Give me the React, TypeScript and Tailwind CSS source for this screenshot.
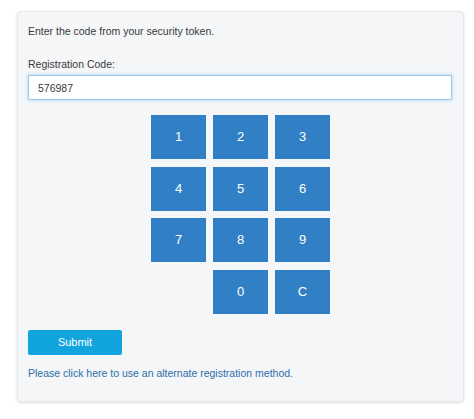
import { useState } from "react";

const keys = ["1", "2", "3", "4", "5", "6", "7", "8", "9", "", "0", "C"];

export default function App() {
  const [code, setCode] = useState("576987");

  const press = (k: string) => {
    if (k === "C") setCode("");
    else setCode((c) => c + k);
  };

  return (
    <div className="w-[474px] h-[419px] bg-white pt-[11px] pl-[17px] font-['Liberation_Sans',Arial,sans-serif]">
      <div className="w-[447px] h-[391px] bg-[#f4f6f8] border border-[#e6e9ec] rounded-[4px] shadow-[0_1px_3px_rgba(0,0,0,0.12)] pt-[12px] px-[10px]">
        <p className="text-[10.5px] leading-[14px] text-[#3a3a3a]">Enter the code from your security token.</p>
        <label className="block mt-[19px] text-[10.5px] leading-[14px] text-[#3a3a3a]">Registration Code:</label>
        <input
          autoFocus
          value={code}
          onChange={(e) => setCode(e.target.value)}
          className="mt-[4px] w-[424px] h-[25px] bg-white border border-[#9ecbf0] shadow-[0_0_3px_rgba(102,175,233,0.6)] px-[9px] text-[10.5px] text-[#3a3a3a] caret-[#333] outline-none"
        />
        <div className="mt-[15px] mx-auto w-[179px] grid grid-cols-[55px_55px_55px] gap-x-[7px] gap-y-[7.5px]">
          {keys.map((k, i) =>
            k === "" ? (
              <div key={i} />
            ) : (
              <button
                key={i}
                onClick={() => press(k)}
                className="h-[44px] bg-[#3180c5] text-white text-[13px] flex items-center justify-center"
              >
                {k}
              </button>
            )
          )}
        </div>
        <button className="mt-[16px] w-[94px] h-[25px] bg-[#12a5dd] rounded-[2px] text-white text-[11px]">Submit</button>
        <p className="mt-[11.5px] text-[10.5px] leading-[14px] text-[#2c6ea8]">Please click here to use an alternate registration method.</p>
      </div>
    </div>
  );
}
